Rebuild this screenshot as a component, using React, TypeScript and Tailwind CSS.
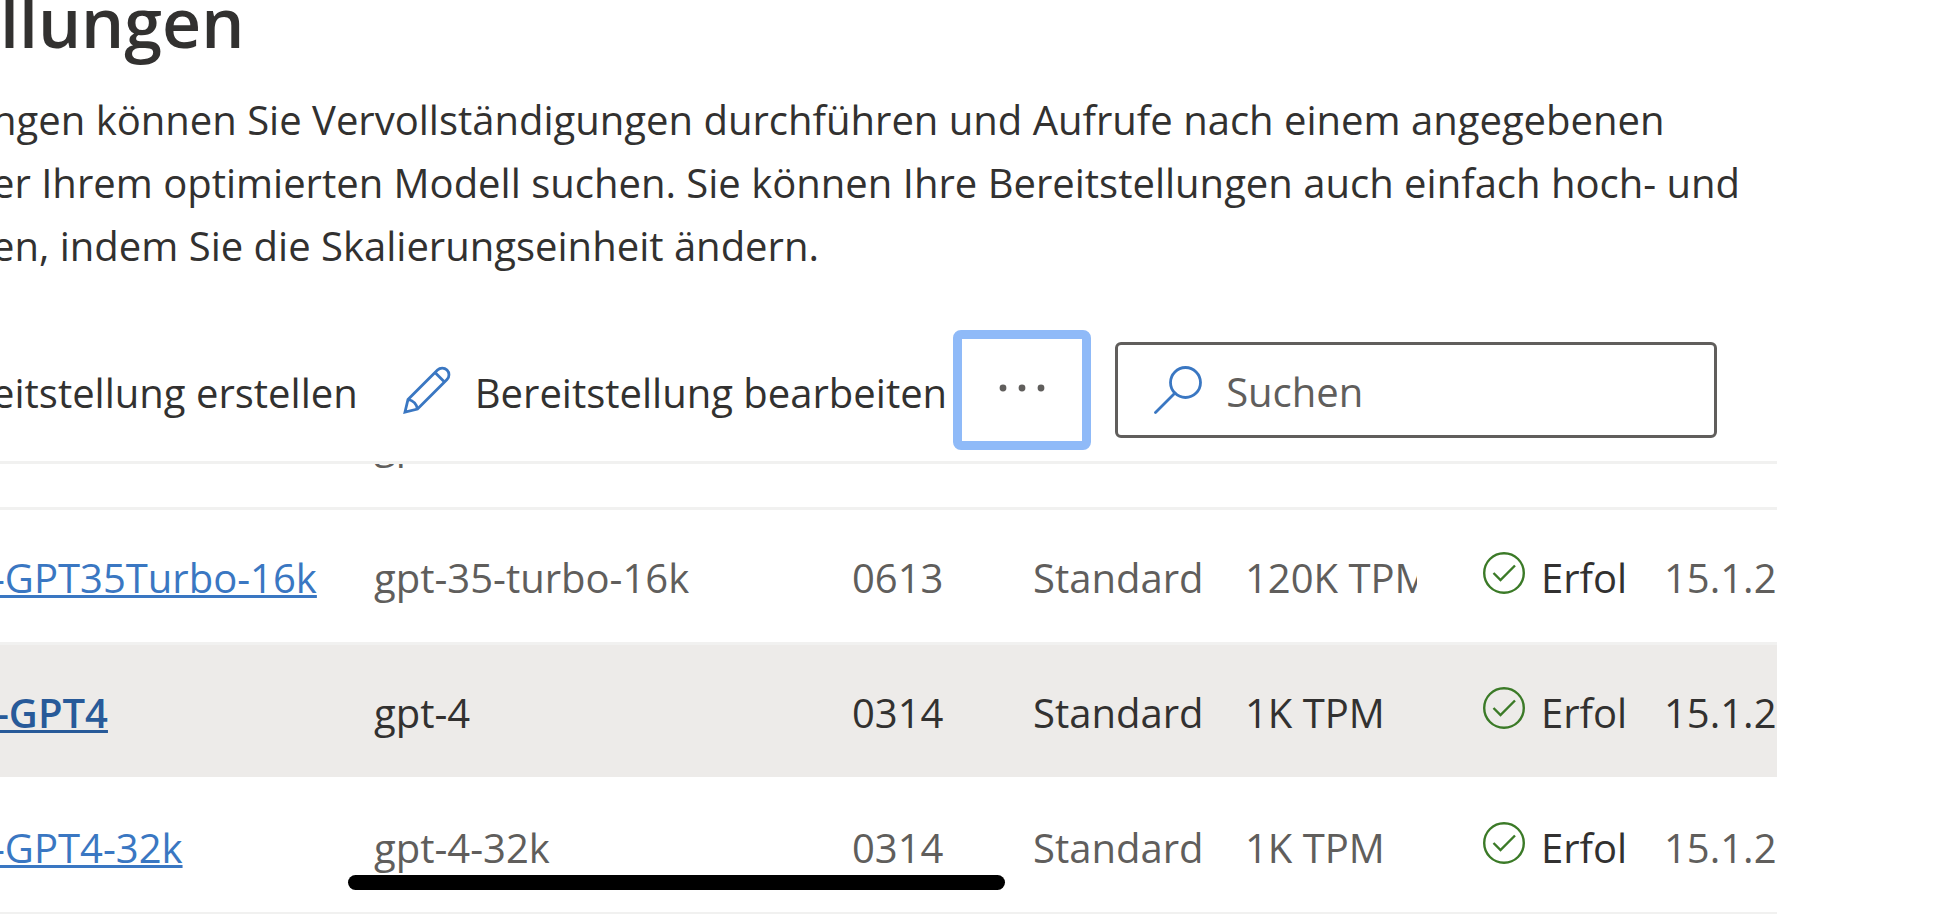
import clsx from 'clsx';

type Deployment = {
  name: string;
  model: string;
  version: string;
  type: string;
  capacity: string;
  status: string;
  created: string;
  selected?: boolean;
};

const deployments: Deployment[] = [
  { name: '-GPT35Turbo', model: 'gpt-35-turbo', version: '0613', type: 'Standard', capacity: '120K TPM', status: 'Erfolgreich', created: '15.1.2024' },
  { name: '-GPT35Turbo-16k', model: 'gpt-35-turbo-16k', version: '0613', type: 'Standard', capacity: '120K TPM', status: 'Erfolgreich', created: '15.1.2024' },
  { name: '-GPT4', model: 'gpt-4', version: '0314', type: 'Standard', capacity: '1K TPM', status: 'Erfolgreich', created: '15.1.2024', selected: true },
  { name: '-GPT4-32k', model: 'gpt-4-32k', version: '0314', type: 'Standard', capacity: '1K TPM', status: 'Erfolgreich', created: '15.1.2024' },
];

function PencilIcon() {
  return (
    <svg viewBox="0 0 48 48" className="w-12 h-12 shrink-0" fill="none" stroke="#3a77c2" strokeWidth="2.8" aria-hidden="true">
      <path d="M2 46 L5 33.5 L34.5 4 A6.6 6.6 0 0 1 44 13.5 L14.5 43 Z" />
      <path d="M32 6.5 L41.5 16" />
      <path d="M5 33.5 C10 34.5 13.5 38 14.5 43" />
    </svg>
  );
}

function SearchIcon() {
  return (
    <svg viewBox="0 0 48 48" className="w-12 h-12 shrink-0" fill="none" stroke="#3a77c2" strokeWidth="2.8" aria-hidden="true">
      <circle cx="31.5" cy="16.5" r="15" />
      <path d="M21 27 L1.5 46.5" strokeLinecap="round" />
    </svg>
  );
}

function SuccessIcon() {
  return (
    <svg viewBox="0 0 42 42" className="-mt-2 w-[42px] h-[42px] shrink-0" fill="none" stroke="#3b7a27" strokeWidth="2.4" aria-hidden="true">
      <circle cx="21" cy="21" r="19.8" />
      <path d="M10.5 21 L17.5 28 L32 13.5" />
    </svg>
  );
}

export default function App() {
  return (
    <main className="min-h-screen overflow-hidden bg-white font-['Open_Sans','Noto_Sans',sans-serif] text-[40px] leading-[63px] text-[#323130]">
      <header className="pr-[175px]">
        <h1 className="-mt-[26px] text-[68px] leading-[96px] font-semibold">llungen</h1>
        <p className="mt-[18px] -ml-2 whitespace-nowrap">
          ngen können Sie Vervollständigungen durchführen und Aufrufe nach einem angegebenen
          <br />
          er Ihrem optimierten Modell suchen. Sie können Ihre Bereitstellungen auch einfach hoch- und
          <br />
          en, indem Sie die Skalierungseinheit ändern.
        </p>
      </header>

      {/* Command bar */}
      <div className="mt-[53px] pr-[235px] h-[120px] flex items-center">
        <button type="button" className="-ml-2 pt-1 whitespace-nowrap">eitstellung erstellen</button>
        <button type="button" className="ml-[45px] flex items-center gap-6 whitespace-nowrap">
          <PencilIcon />
          <span className="pt-1">Bereitstellung bearbeiten</span>
        </button>
        <button
          type="button"
          aria-label="Weitere Optionen"
          className="ml-1.5 w-[138px] h-[120px] shrink-0 rounded-lg border-[9px] border-[#8fbaf8] pb-1 flex items-center justify-center text-[#605e5c]"
        >
          <svg viewBox="0 0 46 8" className="w-[46px] h-2" fill="currentColor" aria-hidden="true">
            <circle cx="4" cy="4" r="3.4" />
            <circle cx="23" cy="4" r="3.4" />
            <circle cx="42" cy="4" r="3.4" />
          </svg>
        </button>
        <label className="ml-6 flex-1 min-w-0 h-24 pl-9 pr-6 rounded-md border-[3px] border-[#605e5c] flex items-center gap-6">
          <SearchIcon />
          <input
            type="search"
            aria-label="Suchen"
            placeholder="Suchen"
            className="flex-1 min-w-0 pt-0.5 bg-transparent outline-none placeholder:text-[#605e5c] placeholder:opacity-100"
          />
        </label>
      </div>

      {/* Deployment list, scrolled past its first row */}
      <div className="relative mt-[11px] mr-[175px] border-t-[3px] border-[#f1f1f0] overflow-hidden">
        <table className="-mt-[89px] w-full table-fixed border-separate border-spacing-0 text-left whitespace-nowrap">
          <colgroup>
            <col className="w-[350px]" />
            <col />
            <col className="w-[181px]" />
            <col className="w-[212px]" />
            <col className="w-[236px]" />
            <col className="w-[185px]" />
            <col className="w-[133px]" />
          </colgroup>
          <tbody>
            {deployments.map((d) => (
              <tr
                key={d.name}
                className={clsx(
                  '[&>td]:h-[135px] [&>td]:border-b-[3px] [&>td]:pt-0.5',
                  d.selected
                    ? 'bg-[#edebe9] text-[#323130] [&>td]:border-white'
                    : 'text-[#605e5c] [&>td]:border-[#f1f1f0]'
                )}
              >
                <td>
                  <a
                    href="#"
                    className={clsx(
                      'underline decoration-[3px] underline-offset-2',
                      d.selected ? '-ml-1 font-semibold text-[#285a99]' : '-ml-2 text-[#3a77c2]'
                    )}
                  >
                    {d.name}
                  </a>
                </td>
                <td className="pl-6">{d.model}</td>
                <td className="pl-[22px]">{d.version}</td>
                <td className="pl-[22px]">{d.type}</td>
                <td className="pl-[22px] pr-[42px]">
                  <div className="overflow-hidden">{d.capacity}</div>
                </td>
                <td className="pl-6 pr-[18px]">
                  <div className="overflow-hidden flex items-center gap-4 text-[#323130]">
                    <SuccessIcon />
                    {d.status}
                  </div>
                </td>
                <td className="pl-5">
                  <div className="overflow-hidden">{d.created}</div>
                </td>
              </tr>
            ))}
          </tbody>
        </table>
        <div className="absolute left-[348px] bottom-[25px] w-[657px] h-[15px] rounded-full bg-black" />
      </div>
    </main>
  );
}
